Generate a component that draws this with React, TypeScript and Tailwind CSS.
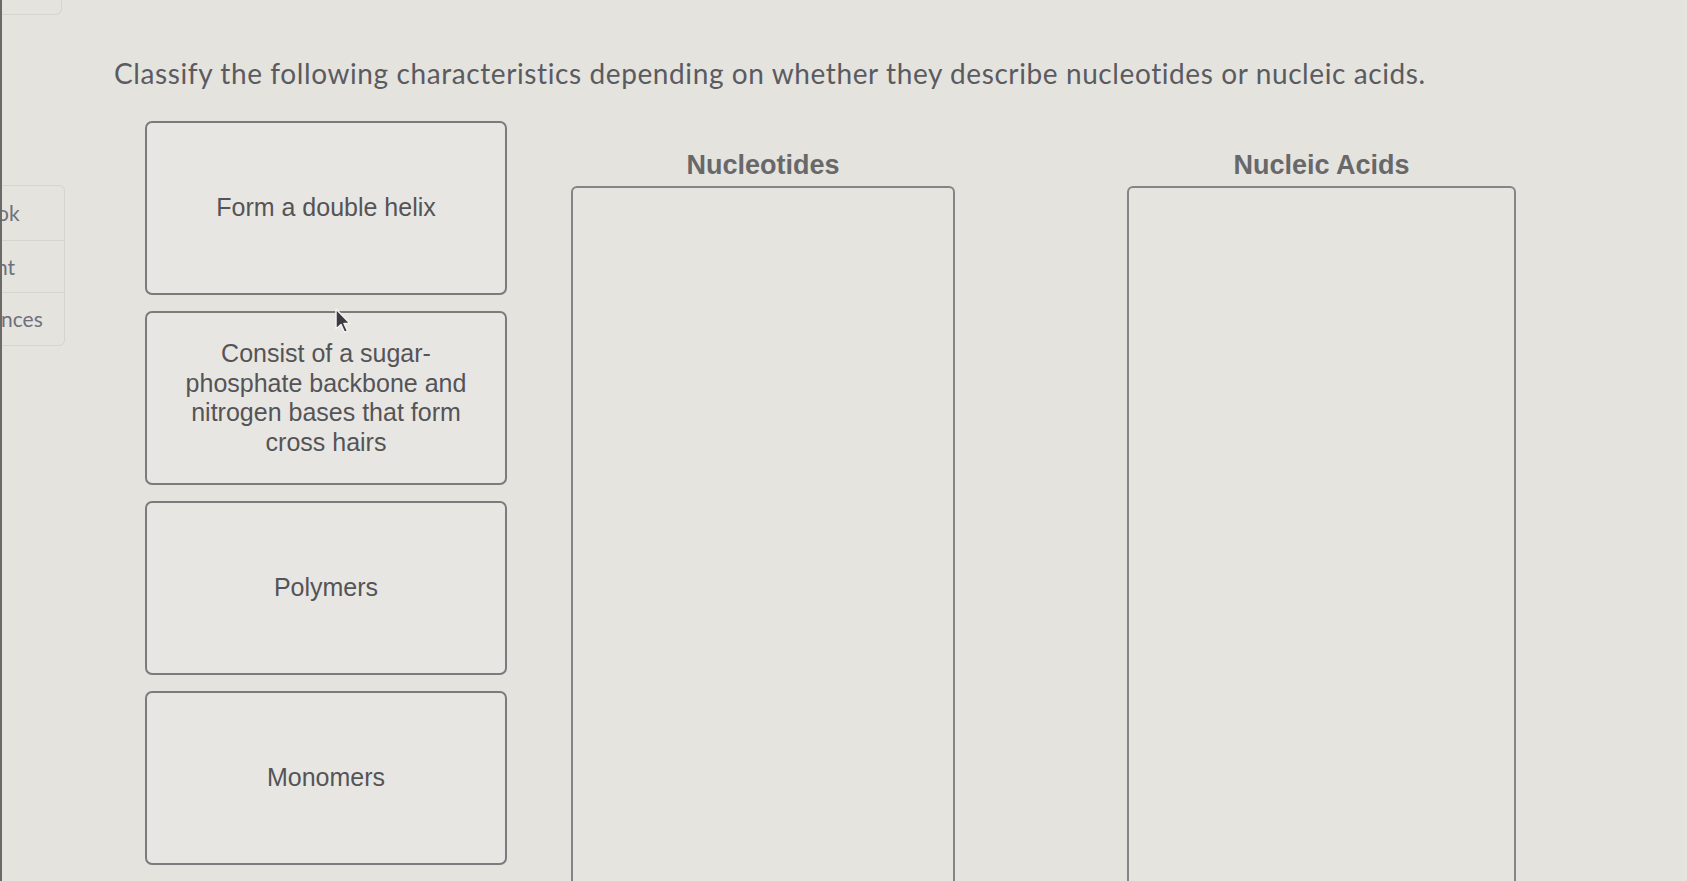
import React from "react";

const cardText = "font-['Liberation_Sans',Arial,sans-serif] text-[25px] leading-[29.5px] text-[#545457] text-center";

function Card({ children }: { children: React.ReactNode }) {
  return (
    <div className="h-[174px] w-[362px] rounded-[7px] border-2 border-[#7b7b7e] bg-[#e8e6e2] flex items-center justify-center px-3">
      <div className={cardText}>{children}</div>
    </div>
  );
}

function Bucket({ title, width }: { title: string; width: number }) {
  return (
    <div className="flex flex-col pt-[61px]" style={{ width }}>
      <div className="h-[30px] text-center font-['Liberation_Sans',Arial,sans-serif] font-bold text-[27px] leading-[30px] text-[#68686b]">
        {title}
      </div>
      <div className="mt-[6px] h-[720px] rounded-t-[6px] border-2 border-b-0 border-[#858487] bg-[#e6e4df]" />
    </div>
  );
}

export default function App() {
  return (
    <div className="relative h-[881px] w-full overflow-hidden bg-[#e5e3de] flex">
      {/* sidebar fragment */}
      <div className="w-[63px] shrink-0 flex flex-col border-l-2 border-[#6a6a6a] font-['Lato','Open_Sans',sans-serif] text-[21px] text-[#6c717c]">
        <div className="h-[15px] w-[60px] rounded-br-[6px] border-b border-r border-[#d6d4cf]" />
        <div className="mt-[170px] w-[63px] rounded-r-[6px] border border-l-0 border-[#d6d4cf] flex flex-col">
          <div className="h-[55px] border-b border-[#d6d4cf] overflow-hidden flex items-center whitespace-nowrap">
            <span className="ml-[-5px]">ok</span>
          </div>
          <div className="h-[52px] border-b border-[#d6d4cf] overflow-hidden flex items-center whitespace-nowrap">
            <span className="ml-[-6px]">nt</span>
          </div>
          <div className="h-[52px] overflow-hidden flex items-center whitespace-nowrap">
            <span className="ml-[-1px]">nces</span>
          </div>
        </div>
      </div>

      {/* main */}
      <div className="flex flex-col">
        <h1 className="mt-[57px] ml-[51px] h-[32px] whitespace-nowrap font-['Lato','Open_Sans',sans-serif] text-[28px] leading-[32px] tracking-[0.6px] font-normal text-[#5a5b61]">
          Classify the following characteristics depending on whether they describe nucleotides or nucleic acids.
        </h1>
        <div className="flex items-start">
          <div className="ml-[82px] mt-[32px] flex flex-col gap-[16px]">
            <Card>Form a double helix</Card>
            <Card>
              Consist of a sugar-
              <br />
              phosphate backbone and
              <br />
              nitrogen bases that form
              <br />
              cross hairs
            </Card>
            <Card>Polymers</Card>
            <Card>Monomers</Card>
          </div>
          <div className="ml-[64px]">
            <Bucket title="Nucleotides" width={384} />
          </div>
          <div className="ml-[172px]">
            <Bucket title="Nucleic Acids" width={389} />
          </div>
        </div>
      </div>

      {/* mouse cursor */}
      <svg className="absolute left-[334px] top-[308px]" width="18" height="28" viewBox="0 0 18 28">
        <path d="M2 1 L2 21 L7 16.5 L10.5 24.5 L13.5 23 L10 15.5 L16 15.5 Z" fill="#3c3c40" stroke="#f2f2f2" strokeWidth="1.5" strokeLinejoin="round" />
      </svg>
    </div>
  );
}
